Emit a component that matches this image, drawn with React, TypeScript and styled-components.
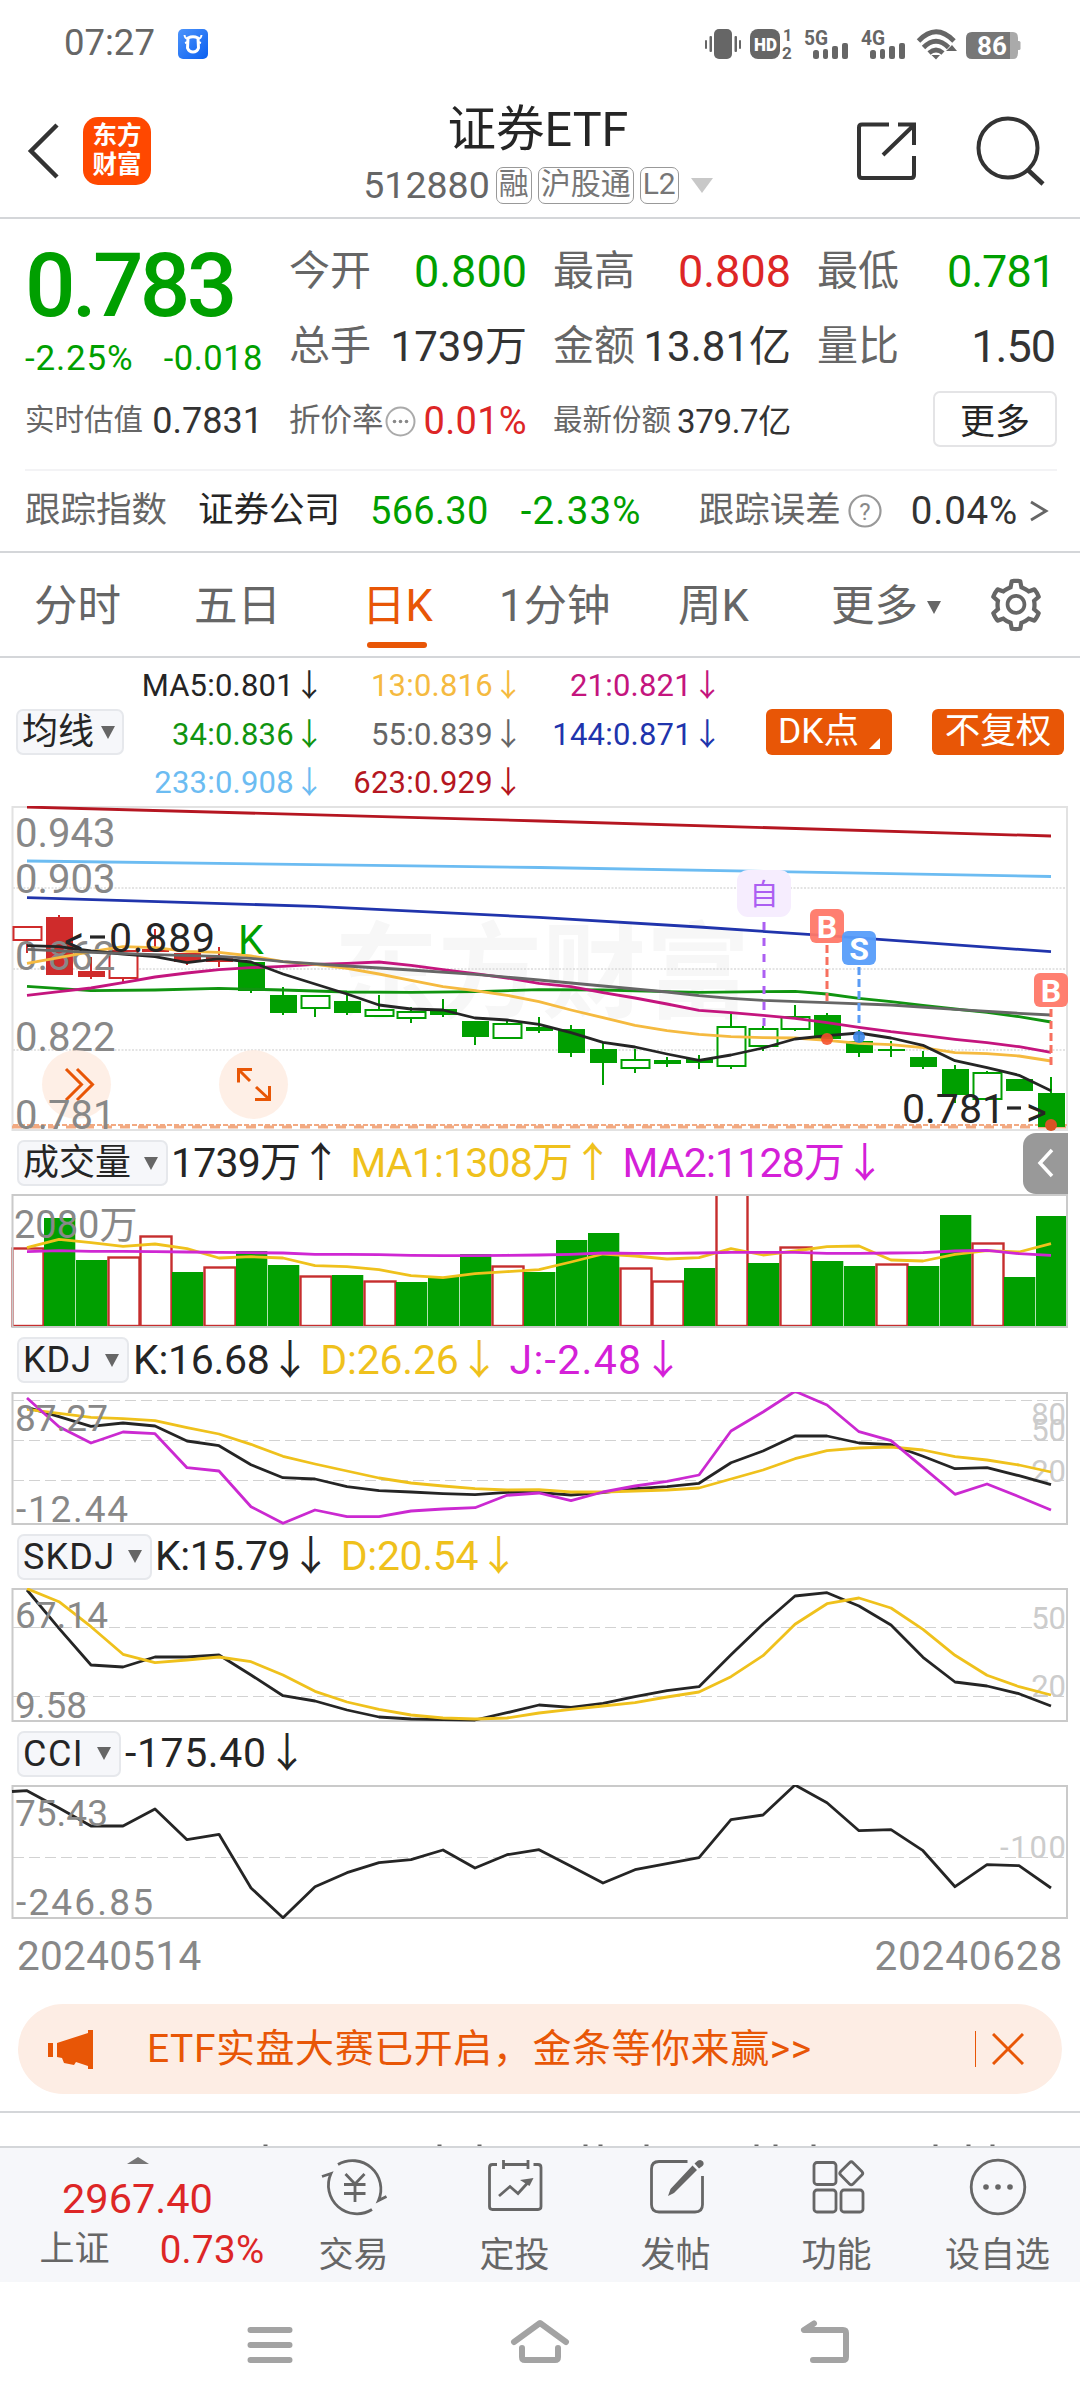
import React from "react";
import styled, { createGlobalStyle } from "styled-components";
import { AiOutlineSetting } from "react-icons/ai";

const C = {
  green: "#009f00",
  red: "#dd2626",
  ink: "#252525",
  dark: "#333333",
  mid: "#666666",
  light: "#888888",
  line: "#d4d6d9",
  orange: "#e85606",
  yellow: "#efc11c",
  pink: "#d420d8",
};

const GlobalStyle = createGlobalStyle`
  * { box-sizing: border-box; }
  body {
    margin: 0;
    background: #fff;
    font-family: Roboto, "Noto Sans CJK SC", sans-serif;
    line-height: 1;
    color: ${C.ink};
  }
  svg { display: block; }
  svg text { font-family: Roboto, "Noto Sans CJK SC", sans-serif; }
`;

const Page = styled.div`
  width: 1080px;
  height: 2408px;
  overflow: hidden;
  background: #fff;
  display: flex;
  flex-direction: column;
`;

const Txt = styled.span<{ $s: number; $c?: string; $ls?: number; $w?: number }>`
  font-size: ${(p) => p.$s}px;
  color: ${(p) => p.$c || C.ink};
  letter-spacing: ${(p) => p.$ls || 0}px;
  font-weight: ${(p) => p.$w || 400};
  white-space: pre;
`;

/* ---------- status bar ---------- */
const StatusBar = styled.div`
  height: 84px;
  flex: none;
  display: flex;
  align-items: center;
  justify-content: space-between;
  padding: 3px 58px 0 64px;
`;
const Row = styled.div<{ $gap?: number }>`
  display: flex;
  align-items: center;
  gap: ${(p) => p.$gap || 0}px;
`;

const AppBadge = () => (
  <svg width="30" height="30" viewBox="0 0 30 30">
    <defs>
      <linearGradient id="bb" x1="0" y1="0" x2="1" y2="1">
        <stop offset="0" stopColor="#4d94fb" />
        <stop offset="1" stopColor="#0a5ff0" />
      </linearGradient>
    </defs>
    <rect width="30" height="30" rx="5" fill="url(#bb)" />
    <path d="M6.500 6 Q7 10 10 9.500 M23.500 6 Q23 10 20 9.500 M7 14 L10 13 M23 14 L20 13" fill="none" stroke="#fff" strokeWidth="2" />
    <path d="M10 9 Q15 6.500 20 9 L20.500 19 Q19 23 15 23 Q11 23 9.500 19 Z" fill="none" stroke="#fff" strokeWidth="3" />
  </svg>
);

const StatusIcons = () => (
  <svg width="320" height="34" viewBox="702 25 320 34">
    <g fill={C.mid}>
      <rect x="714" y="27" width="18" height="30" rx="5" />
      <rect x="705" y="38" width="2" height="9" rx="1" />
      <rect x="709.500" y="34" width="2.500" height="16" rx="1" />
      <rect x="734.500" y="34" width="2.500" height="16" rx="1" />
      <rect x="739" y="38" width="2" height="9" rx="1" />
      <rect x="750" y="27" width="30" height="30" rx="8" />
    </g>
    <text x="754" y="48.500" fontSize="18" fontWeight="900" fill="#fff" textLength="23" lengthAdjust="spacingAndGlyphs">HD</text>
    <g fill={C.mid} fontWeight="700">
      <text x="783" y="39" fontSize="16">1</text>
      <text x="782" y="57" fontSize="17">2</text>
      <text x="804" y="42.500" fontSize="20" textLength="24" lengthAdjust="spacingAndGlyphs">5G</text>
      <text x="861" y="42.500" fontSize="20" textLength="24" lengthAdjust="spacingAndGlyphs">4G</text>
    </g>
    <g fill={C.mid}>
      {[813, 870].map((x) => (
        <g key={x}>
          <rect x={x} y="48" width="6" height="9" rx="2.500" />
          <rect x={x + 10} y="47" width="5" height="10" rx="2" />
          <rect x={x + 19} y="44" width="6" height="13" rx="2" />
          <rect x={x + 29} y="41" width="6" height="16" rx="2" />
        </g>
      ))}
    </g>
    <g fill="none" stroke={C.mid} strokeWidth="4.800">
      <path d="M918.500 39 Q936 20.500 954 39" />
      <path d="M923.500 45.500 Q936 33 948.500 45.500" />
      <path d="M929 51 Q936 45 943 51" />
    </g>
    <path d="M931.500 53 H940 L936 57.500 Z M952 43 L957 49 H946 Z" fill={C.mid} />
    <path d="M1009 30 h4 q5 0 5 6 v15 q0 6 -5 6 h-4 Z" fill="#aaa" />
    <rect x="1016.500" y="39" width="4" height="9" rx="1.500" fill="#aaa" />
    <path d="M1010 30 H972 q-6 0 -6 6 v15 q0 6 6 6 H1010 Z" fill="#777" />
    <text x="992" y="53" fontSize="26" fontWeight="700" fill="#fff" textAnchor="middle">86</text>
  </svg>
);

/* ---------- header ---------- */
const Header = styled.header`
  height: 135px;
  flex: none;
  display: grid;
  grid-template-columns: 1fr auto 1fr;
  align-items: center;
  padding: 0 34px 0 27px;
  border-bottom: 2px solid ${C.line};
`;
const Logo = styled.div`
  width: 68px;
  height: 68px;
  border-radius: 15px;
  background: #ff4800;
  color: #fff;
  font-size: 24.500px;
  font-weight: 700;
  line-height: 29px;
  padding-top: 4px;
  text-align: center;
`;
const TitleCol = styled.div`
  display: flex;
  flex-direction: column;
  align-items: center;
  gap: 12px;
  padding: 9px 0 0 3px;
`;
const Tag = styled.span`
  height: 37px;
  padding: 0 2px 2px;
  border: 1.500px solid #999;
  border-radius: 7px;
  font-size: 30px;
  color: #777;
  display: flex;
  align-items: center;
`;
const Tri = styled.i<{ $w: number; $h: number; $c: string }>`
  width: 0;
  height: 0;
  border-left: ${(p) => p.$w / 2}px solid transparent;
  border-right: ${(p) => p.$w / 2}px solid transparent;
  border-top: ${(p) => p.$h}px solid ${(p) => p.$c};
`;
const HeadActions = styled.div`
  display: flex;
  justify-content: flex-end;
  align-items: center;
  gap: 60px;
`;

/* ---------- quote ---------- */
const Quote = styled.section`
  height: 334px;
  flex: none;
  padding: 15px 23px 0 25px;
  border-bottom: 2px solid ${C.line};
`;
const QuoteTop = styled.div`
  display: grid;
  grid-template-columns: 238px 238px 238px 238px;
  grid-template-rows: 75px 75px 74px;
  column-gap: 26px;
  height: 235px;
`;
const PriceBlock = styled.div`
  grid-row: span 2;
  display: flex;
  flex-direction: column;
  gap: 5px;
`;
const Price = styled.div`
  height: 102px;
  font-size: 89px;
  font-weight: 500;
  letter-spacing: -3.700px;
  color: ${C.green};
  display: flex;
  align-items: center;
`;
const Cell = styled.div`
  display: flex;
  align-items: center;
  justify-content: space-between;
`;
const MoreBtn = styled.button`
  justify-self: end;
  align-self: center;
  width: 124px;
  height: 56px;
  margin: -4px -2px 0 0;
  padding: 0 0 3px;
  border: 2px solid #e4e4e6;
  border-radius: 7px;
  background: #fff;
  font: 400 35px Roboto, "Noto Sans CJK SC", sans-serif;
  color: ${C.ink};
`;
const TrackRow = styled.div`
  height: 82px;
  border-top: 2px solid #f3f3f5;
  display: flex;
  align-items: center;
`;
const Gap = styled.i<{ $w: number }>`
  width: ${(p) => p.$w}px;
  flex: none;
`;

/* ---------- tabs ---------- */
const Tabs = styled.nav`
  height: 105px;
  flex: none;
  border-bottom: 2px solid ${C.line};
  display: flex;
  align-items: stretch;
  padding-left: 34px;
`;
const Tab = styled.div<{ $w: number; $top?: number }>`
  width: ${(p) => p.$w}px;
  font-size: 43.500px;
  color: ${C.mid};
  display: flex;
  align-items: center;
  gap: 9px;
  padding-top: ${(p) => p.$top ?? 5}px;
  white-space: nowrap;
`;
const OnTab = styled.span`
  height: 100%;
  color: ${C.orange};
  display: flex;
  flex-direction: column;
  justify-content: flex-end;
  align-items: center;
  gap: 14px;
  padding-bottom: 8px;
  &::after {
    content: "";
    width: 60px;
    height: 6px;
    border-radius: 3px;
    background: ${C.orange};
  }
`;

/* ---------- legends ---------- */
const MaBar = styled.div`
  height: 148px;
  flex: none;
  display: flex;
  align-items: center;
  padding: 0 0 0 16px;
`;
const PickBtn = styled.div<{ $w: number; $gap: number; $ls?: number }>`
  width: ${(p) => p.$w}px;
  height: 46px;
  flex: none;
  border: 2px solid #e6e8ec;
  border-radius: 7px;
  background: #f6f7fa;
  font-size: 36px;
  letter-spacing: ${(p) => p.$ls || 0}px;
  color: ${C.ink};
  display: flex;
  align-items: center;
  padding-left: 4px;
  padding-right: ${(p) => p.$gap}px;
  justify-content: space-between;
`;
const MaGrid = styled.div`
  display: grid;
  grid-template-columns: 201px 199px 199px;
  grid-auto-rows: 48.500px;
  justify-items: end;
  align-items: center;
  padding-top: 4px;
`;
const OrangeBtn = styled.div<{ $w: number }>`
  width: ${(p) => p.$w}px;
  height: 46px;
  margin-left: 40px;
  border-radius: 6px;
  background: ${C.orange};
  color: #fff;
  font-size: 35.500px;
  display: flex;
  align-items: center;
  justify-content: center;
`;
const Corner = styled.i`
  align-self: flex-end;
  margin: 0 0 6px 10px;
  border-left: 11px solid transparent;
  border-bottom: 11px solid #fff;
`;
const Legend = styled.div<{ $h: number }>`
  height: ${(p) => p.$h}px;
  flex: none;
  display: flex;
  align-items: center;
  padding-left: 17px;
`;
const Drawer = styled.div`
  width: 45px;
  height: 61px;
  margin-left: auto;
  margin-right: 12px;
  border-radius: 13px 0 0 13px;
  background: #999;
  display: flex;
  align-items: center;
  justify-content: center;
`;

/* ---------- chart data ---------- */
const X = (i: number) => 27 + 32 * i;
const pts = (ys: number[], base: number) => ys.map((y, i) => `${X(i)},${(base + y / 3).toFixed(1)}`).join(" ");
const sparse = (p: number[][], base: number) => p.map(([i, y]) => `${X(i)},${(base + y / 3).toFixed(1)}`).join(" ");

// [kind, bodyTop, bodyBottom, wickTop, wickBottom]
type K = [string, number, number, number, number];
const candles: K[] = [
  ["rh", 927, 940, 927, 953], ["rf", 917, 975, 915, 975], ["rf", 971, 977, 957, 979], ["rh", 951, 978, 951, 982],
  ["rf", 949, 952, 929, 952], ["rf", 953, 962, 953, 965], ["rf", 957, 962, 947, 967], ["gf", 962, 991, 962, 993],
  ["gf", 995, 1013, 987, 1015], ["gh", 996, 1008, 995, 1017], ["gf", 1001, 1013, 995, 1015], ["gh", 1010, 1016, 995, 1017],
  ["gh", 1012, 1018, 1007, 1023], ["gf", 1009, 1015, 999, 1017], ["gf", 1021, 1037, 1021, 1045], ["gh", 1024, 1038, 1021, 1039],
  ["gf", 1027, 1031, 1017, 1033], ["gf", 1029, 1053, 1025, 1057], ["gf", 1049, 1063, 1043, 1085], ["gh", 1060, 1068, 1049, 1073],
  ["gf", 1060, 1064, 1057, 1067], ["gf", 1059, 1063, 1055, 1069], ["gh", 1027, 1066, 1013, 1069], ["gh", 1029, 1046, 1026, 1051],
  ["gh", 1017, 1029, 1005, 1031], ["gf", 1015, 1039, 1013, 1039], ["gf", 1041, 1053, 1030, 1057], ["gf", 1049, 1051, 1041, 1057],
  ["gf", 1057, 1067, 1051, 1069], ["gf", 1069, 1095, 1065, 1103], ["gh", 1073, 1099, 1071, 1099], ["gf", 1079, 1091, 1079, 1091],
  ["gf", 1093, 1127, 1077, 1130],
];
const ma5 = [467, 470, 483, 492, 500, 518, 506, 516, 552, 582, 612, 645, 657, 660, 684, 690, 703, 728, 757, 771, 792, 811, 795, 774, 747, 737, 729, 744, 766, 812, 833, 856, 902];
const ma13 = [520, 503, 485, 470, 473, 484, 487, 498, 515, 523, 535, 552, 571, 590, 602, 616, 635, 660, 683, 706, 722, 733, 740, 743, 744, 751, 760, 764, 773, 788, 791, 798, 813];
const ma21 = [616, 605, 594, 578, 561, 549, 539, 533, 529, 523, 520, 516, 526, 539, 551, 564, 580, 590, 608, 624, 642, 661, 668, 676, 685, 698, 712, 725, 736, 748, 758, 770, 787];
const ma34 = [[0, 589], [2, 602], [4, 600], [6, 595], [8, 600], [10, 606], [12, 607], [14, 605], [16, 599], [18, 600], [20, 605], [21, 607], [23, 605], [24, 604], [25, 612], [26, 625], [27, 635], [28, 646], [29, 657], [30, 667], [31, 680], [32, 696]];
const ma55 = [[0, 478], [2, 487], [4, 494], [6, 499], [7, 505], [8, 515], [10, 528], [12, 540], [14, 553], [16, 570], [18, 588], [20, 606], [21, 617], [22, 625], [23, 631], [25, 638], [27, 645], [29, 658], [31, 670], [32, 675]];
const ma144 = [[0, 323], [9, 349], [16, 382], [21, 411], [25, 437], [32, 485]];

const vols = "r1248 g1218 g1260 r1257 r1236 g1272 r1267 g1251 g1265 r1276 g1275 r1281 g1282 g1277 g1254 r1266 g1272 g1240 g1233 r1268 r1281 g1268 r1194 g1263 r1247 g1261 g1266 r1264 g1266 g1215 r1243 g1277 g1216".split(" ");
const volMa1 = [353, 328, 338, 349, 342, 356, 384, 380, 384, 407, 410, 419, 437, 443, 431, 425, 419, 396, 372, 378, 387, 383, 356, 375, 363, 350, 348, 390, 393, 373, 362, 366, 341];
const volMa2 = [365, 362, 364, 364, 365, 366, 367, 368, 369, 373, 373, 374, 376, 377, 377, 376, 375, 373, 369, 370, 370, 369, 367, 367, 367, 370, 370, 369, 368, 363, 361, 371, 376];
const kdjK = [232, 260, 289, 279, 288, 333, 347, 404, 443, 447, 470, 482, 486, 491, 494, 487, 488, 495, 488, 476, 470, 460, 398, 363, 318, 318, 339, 344, 379, 416, 413, 437, 464];
const kdjD = [238, 250, 262, 266, 272, 293, 312, 343, 379, 402, 423, 444, 459, 468, 476, 480, 479, 486, 486, 483, 480, 474, 447, 420, 386, 362, 354, 351, 360, 380, 390, 405, 426];
const kdjJ = [204, 290, 339, 306, 311, 413, 423, 530, 580, 540, 560, 560, 543, 537, 533, 496, 489, 512, 486, 468, 454, 435, 303, 246, 184, 225, 305, 332, 412, 493, 462, 500, 540];
const skK = [180, 295, 405, 411, 381, 381, 375, 435, 497, 513, 540, 561, 567, 569, 570, 548, 525, 532, 520, 500, 482, 470, 374, 282, 198, 188, 228, 285, 382, 456, 468, 491, 528];
const skD = [176, 215, 290, 373, 398, 390, 381, 395, 435, 484, 516, 538, 555, 564, 567, 564, 549, 538, 528, 518, 501, 486, 440, 377, 283, 221, 204, 234, 298, 376, 436, 470, 495];
const cci = [182, 234, 288, 288, 237, 329, 313, 474, 563, 470, 428, 398, 389, 360, 414, 374, 359, 409, 459, 419, 401, 383, 269, 255, 165, 218, 302, 299, 362, 470, 404, 407, 474];

const Line = ({ p, c, w = 2.8 }: { p: string; c: string; w?: number }) => (
  <polyline points={p} fill="none" stroke={c} strokeWidth={w} strokeLinejoin="round" />
);
const AxisText = ({ x = 15, y, s = 40, c = C.light, end, children }: { x?: number; y: number; s?: number; c?: string; end?: boolean; children: React.ReactNode }) => (
  <text x={x} y={y} fontSize={s} fill={c} textAnchor={end ? "end" : "start"}>{children}</text>
);
const Frame = ({ y, h, c = "#cacaca" }: { y: number; h: number; c?: string }) => (
  <rect x="12.500" y={y} width="1054.500" height={h} fill="none" stroke={c} strokeWidth="2" />
);
const Dash = ({ y }: { y: number }) => (
  <line x1="13" x2="1067" y1={y} y2={y} stroke="#d2d2d2" strokeWidth="1.200" strokeDasharray="11 5" />
);
const Marker = ({ x, y, t, c }: { x: number; y: number; t: string; c: string }) => (
  <g>
    <rect x={x - 17} y={y} width="34" height="34" rx="6" fill={c} opacity="0.95" />
    <text x={x} y={y + 28.5} fontSize="32" fontWeight="700" fill="#fff" textAnchor="middle">{t}</text>
  </g>
);

const PriceChart = () => (
  <svg width="1080" height="326" viewBox="0 806 1080 326">
    <text x="334" y="1010" fontSize="104" fontWeight="700" fill="#f7f7f7">东方财富</text>
    {[888, 969, 1050].map((y) => (
      <line key={y} x1="13" x2="1067" y1={y} y2={y} stroke="#dcdcdc" strokeWidth="1.500" strokeDasharray="2 1.500" />
    ))}
    <Frame y={807} h={323} c="#e2e2e2" />
    <AxisText y={847}>0.943</AxisText>
    <AxisText y={893}>0.903</AxisText>
    <AxisText y={1051}>0.822</AxisText>
    <g stroke="#f2a981">
      <line x1="13" x2="1067" y1="1125" y2="1125" strokeWidth="2" strokeDasharray="5 2" />
      <line x1="12" x2="1067" y1="1127" y2="1127" strokeWidth="3" strokeDasharray="10 8" />
    </g>
    {candles.map(([k, t, b, wt, wb], i) => {
      const c = k[0] === "r" ? "#cf2b2b" : "#009f00";
      const hollow = k[1] === "h";
      return (
        <g key={i} stroke={c} strokeWidth="2">
          <line x1={X(i)} x2={X(i)} y1={wt} y2={t} />
          <line x1={X(i)} x2={X(i)} y1={b} y2={wb} />
          {hollow ? (
            <rect x={X(i) - 13.5} y={t} width="28" height={b - t} fill="#fff" />
          ) : (
            <rect x={X(i) - 13} y={t} width="27" height={b - t} fill={c} stroke="none" />
          )}
        </g>
      );
    })}
    <AxisText y={970}>0.862</AxisText>
    <Line p="27,807 540,821 1051,836" c="#b51621" />
    <Line p="27,861 540,867.500 1051,876.500" c="#6cbcf2" />
    <Line p={sparse(ma144, 790)} c="#2034ac" />
    <Line p={sparse(ma34, 790)} c="#109410" />
    <Line p={pts(ma21, 790)} c="#c4157e" />
    <Line p={pts(ma13, 790)} c="#f5ba40" />
    <Line p={pts(ma5, 790)} c={C.ink} />
    <Line p={sparse(ma55, 790)} c="#666" />
    <text x="64" y="955" fontSize="40" fill={C.ink}>&lt;</text>
    <line x1="90" x2="105" y1="937" y2="937" stroke={C.ink} strokeWidth="3.200" />
    <text x="109" y="952" fontSize="41" fill={C.ink} textLength="106">0.889</text>
    <text x="238" y="954" fontSize="41" fill={C.green}>K</text>
    <circle cx="76.500" cy="1084.500" r="34.500" fill="#fee9dd" opacity="0.75" />
    <circle cx="253.500" cy="1084.500" r="34.500" fill="#fee9dd" opacity="0.75" />
    <g fill="none" stroke={C.orange} strokeWidth="3">
      <path d="M66 1069 L81.500 1084.500 L66 1100 M77 1069 L92.500 1084.500 L77 1100" />
      <path d="M238.500 1082.500 V1069.500 H252 M239 1070 L250 1081 M269.500 1086 V1099.500 H255 M269 1099 L256 1087" />
    </g>
    <AxisText y={1129}>0.781</AxisText>
    <g strokeWidth="3" fill="none">
      <line x1="764" x2="764" y1="922" y2="1026" stroke="#ac5ff2" strokeDasharray="8 8" />
      <line x1="827" x2="827" y1="945" y2="1001" stroke="#f7705f" strokeDasharray="8 4" />
      <line x1="859" x2="859" y1="967" y2="1024" stroke="#5b9cf5" strokeDasharray="8 4" />
      <line x1="1051" x2="1051" y1="1009" y2="1066" stroke="#f7705f" strokeDasharray="8 4" />
    </g>
    <rect x="737" y="870" width="54" height="47" rx="11" fill="#f6edfe" />
    <text x="764" y="905" fontSize="29" fill="#ac5ff2" textAnchor="middle">自</text>
    <Marker x={827} y={909} t="B" c="#ff7868" />
    <Marker x={859} y={931} t="S" c="#579dfa" />
    <Marker x={1051} y={973} t="B" c="#ff7868" />
    <text x="902" y="1123" fontSize="41" fill={C.ink}>0.781</text>
    <line x1="1007" x2="1021" y1="1108" y2="1108" stroke={C.ink} strokeWidth="3.200" />
    <text x="1026" y="1126" fontSize="40" fill={C.ink}>&gt;</text>
    <circle cx="827" cy="1039" r="6" fill="#f4512b" opacity="0.9" />
    <circle cx="859" cy="1037" r="6" fill="#3b86ea" opacity="0.9" />
    <circle cx="1051" cy="1125" r="6" fill="#d95325" />
  </svg>
);

const VolumeChart = () => (
  <svg width="1080" height="134" viewBox="0 1194 1080 134">
    {vols.map((v, i) => {
      const top = Number(v.slice(1));
      return v[0] === "r" ? (
        <rect key={i} x={12.5 + 32 * i} y={top + 0.5} width="31" height={1325.5 - top} fill="#fff" stroke="#c62e2e" strokeWidth="2.400" />
      ) : (
        <rect key={i} x={12 + 32 * i} y={top} width="31.300" height={1326.5 - top} fill="#009f00" />
      );
    })}
    <Frame y={1195} h={132} />
    <text x="14" y="1238" fontSize="38" fill={C.light}>2080万</text>
    <Line p={pts(volMa1, 1130)} c={C.yellow} />
    <Line p={pts(volMa2, 1130)} c="#cf27d3" />
  </svg>
);

const KdjChart = () => (
  <svg width="1080" height="133" viewBox="0 1392 1080 133">
    <Frame y={1393} h={131} />
    {[1400.5, 1440.5, 1480.5].map((y) => <Dash key={y} y={y} />)}
    <AxisText x={1066} y={1425} s={31} c="#ccc" end>80</AxisText>
    <AxisText x={1066} y={1441} s={31} c="#ccc" end>50</AxisText>
    <AxisText x={1066} y={1482} s={31} c="#ccc" end>20</AxisText>
    <Line p={pts(kdjK, 1330)} c={C.ink} />
    <Line p={pts(kdjD, 1330)} c={C.yellow} />
    <Line p={pts(kdjJ, 1330)} c="#cb29d1" />
    <AxisText y={1431} s={37}>87.27</AxisText>
    <text x="16" y="1521.500" fontSize="37" fill={C.light} textLength="112">-12.44</text>
  </svg>
);

const SkdjChart = () => (
  <svg width="1080" height="134" viewBox="0 1588 1080 134">
    <Frame y={1589} h={132} />
    {[1627.5, 1696.5].map((y) => <Dash key={y} y={y} />)}
    <AxisText x={1066} y={1629} s={31} c="#ccc" end>50</AxisText>
    <AxisText x={1066} y={1697} s={31} c="#ccc" end>20</AxisText>
    <Line p={pts(skK, 1530)} c={C.ink} />
    <Line p={pts(skD, 1530)} c={C.yellow} />
    <AxisText y={1628} s={37}>67.14</AxisText>
    <AxisText y={1718} s={37}>9.58</AxisText>
  </svg>
);

const CciChart = () => (
  <svg width="1080" height="134" viewBox="0 1785 1080 134">
    <Frame y={1786} h={132} />
    <Dash y={1857.5} />
    <text x="1000" y="1858" fontSize="31" fill="#ccc" textLength="66">-100</text>
    <Line p={"12,1791.500 " + pts(cci, 1730)} c={C.ink} />
    <AxisText y={1826} s={37}>75.43</AxisText>
    <text x="16" y="1915" fontSize="37" fill={C.light} textLength="137">-246.85</text>
  </svg>
);

/* ---------- bottom ---------- */
const Dates = styled.div`
  height: 85px;
  flex: none;
  display: flex;
  justify-content: space-between;
  padding: 17px 17px 0 17px;
`;
const Banner = styled.div`
  height: 90px;
  flex: none;
  margin: 0 18px;
  border-radius: 45px;
  background: #fdede4;
  display: flex;
  align-items: center;
  padding: 0 38px 0 29px;
`;
const Sep = styled.i`
  width: 1.500px;
  height: 36px;
  margin-left: auto;
  margin-right: 16px;
  background: ${C.orange};
`;
const Peek = styled.div`
  height: 37px;
  flex: none;
  margin-top: 17px;
  border-top: 2px solid ${C.line};
  border-bottom: 2px solid ${C.line};
  display: flex;
  align-items: flex-end;
`;
const BottomBar = styled.div`
  height: 134px;
  flex: none;
  background: #f6f7fa;
  display: flex;
`;
const IndexBox = styled.div`
  width: 273px;
  display: flex;
  flex-direction: column;
  align-items: center;
  padding: 9px 0 0 2px;
`;
const IndexLine = styled.div<{ $mt: number; $gap?: number; $pl?: number }>`
  margin-top: ${(p) => p.$mt}px;
  padding-left: ${(p) => p.$pl || 0}px;
  display: flex;
  align-items: center;
  gap: ${(p) => p.$gap || 0}px;
`;
const UpTri = styled.i`
  border-left: 11px solid transparent;
  border-right: 11px solid transparent;
  border-bottom: 7px solid #777;
`;
const NavItem = styled.div`
  width: 161px;
  display: flex;
  flex-direction: column;
  align-items: center;
  padding-top: 7px;
  gap: 19px;
  font-size: 35px;
  color: ${C.mid};
`;
const SysNav = styled.div`
  flex: 1;
  display: flex;
  padding: 34px 0 0 240px;
`;

const NavIcon = ({ cx, children }: { cx: number; children: React.ReactNode }) => (
  <svg width="70" height="64" viewBox={`${cx - 35} 2154 70 64`} fill="none" stroke={C.mid} strokeWidth="2.800">{children}</svg>
);

const maItems: [string, string][] = [
  ["MA5:0.801↓", C.ink], ["13:0.816↓", "#f5ba40"], ["21:0.821↓", "#c4157e"],
  ["34:0.836↓", "#109410"], ["55:0.839↓", "#666"], ["144:0.871↓", "#2034ac"],
  ["233:0.908↓", "#6cbcf2"], ["623:0.929↓", "#b51621"],
];

export default function App() {
  return (
    <Page>
      <GlobalStyle />
      <StatusBar>
        <Row $gap={23}>
          <Txt $s={36.5} $c={C.mid}>07:27</Txt>
          <AppBadge />
        </Row>
        <StatusIcons />
      </StatusBar>

      <Header>
        <Row $gap={23}>
          <svg width="33" height="56" viewBox="0 0 33 56"><path d="M30 2 L4 28 L30 54" fill="none" stroke={C.dark} strokeWidth="4.500" /></svg>
          <Logo>东方<br />财富</Logo>
        </Row>
        <TitleCol>
          <Txt $s={48.5}>证券ETF</Txt>
          <Row $gap={6}>
            <Txt $s={37.5} $c={C.mid}>512880</Txt>
            <Tag>融</Tag><Tag>沪股通</Tag><Tag>L2</Tag>
            <Gap $w={0} /><Tri $w={22} $h={15} $c="#c8c8c8" />
          </Row>
        </TitleCol>
        <HeadActions>
          <svg width="60" height="60" viewBox="856 121 60 60" fill="none" stroke={C.dark} strokeWidth="4">
            <path d="M889 124.500 H862 Q859 124.500 859 127.500 V175 Q859 178 862 178 H911 Q914 178 914 175 V156 M898 124.500 H914 V145 M913 126 L883 155" />
          </svg>
          <svg width="70" height="72" viewBox="977 115 70 72" fill="none" stroke={C.dark} strokeWidth="4">
            <circle cx="1009" cy="148" r="29.500" /><path d="M1029 170 L1044 184" strokeWidth="4.500" />
          </svg>
        </HeadActions>
      </Header>

      <Quote>
        <QuoteTop>
          <PriceBlock>
            <Price>0.783</Price>
            <Cell><Txt $s={35} $c={C.green} $ls={0.8}>-2.25%</Txt><Txt $s={34.5} $c={C.green} $ls={0.5}>-0.018</Txt></Cell>
          </PriceBlock>
          <Cell><Txt $s={41} $c={C.mid}>今开</Txt><Txt $s={45} $c={C.green}>0.800</Txt></Cell>
          <Cell><Txt $s={41} $c={C.mid}>最高</Txt><Txt $s={45} $c={C.red}>0.808</Txt></Cell>
          <Cell><Txt $s={41} $c={C.mid}>最低</Txt><Txt $s={45} $c={C.green} $ls={-1}>0.781</Txt></Cell>
          <Cell><Txt $s={41} $c={C.mid}>总手</Txt><Txt $s={42} $c={C.dark}>1739万</Txt></Cell>
          <Cell><Txt $s={41} $c={C.mid}>金额</Txt><Txt $s={42} $c={C.dark}>13.81亿</Txt></Cell>
          <Cell><Txt $s={41} $c={C.mid}>量比</Txt><Txt $s={45} $c={C.dark} $ls={-1}>1.50</Txt></Cell>
          <Cell><Txt $s={29.5} $c={C.mid}>实时估值</Txt><Txt $s={36} $c={C.dark}>0.7831</Txt></Cell>
          <Cell>
            <Row $gap={1}>
              <Txt $s={31.5} $c={C.mid}>折价率</Txt>
              <svg width="31" height="31" viewBox="0 0 31 31">
                <circle cx="15.500" cy="15.500" r="14" fill="none" stroke="#aaa" strokeWidth="2" />
                {[9.5, 15.5, 21.5].map((x) => <circle key={x} cx={x} cy="15.500" r="1.800" fill="#888" />)}
              </svg>
            </Row>
            <Txt $s={38} $c={C.red} $ls={0.3}>0.01%</Txt>
          </Cell>
          <Cell><Txt $s={29.5} $c={C.mid}>最新份额</Txt><Txt $s={33} $c={C.dark} $ls={-0.3}>379.7亿</Txt></Cell>
          <MoreBtn>更多</MoreBtn>
        </QuoteTop>
        <TrackRow>
          <Txt $s={35.5} $c={C.mid}>跟踪指数</Txt><Gap $w={31} />
          <Txt $s={35.5}>证券公司</Txt><Gap $w={30} />
          <Txt $s={38} $c={C.green} $ls={0.3}>566.30</Txt><Gap $w={32} />
          <Txt $s={38.5} $c={C.green} $ls={1.2}>-2.33%</Txt><Gap $w={57} />
          <Txt $s={35.5} $c={C.mid}>跟踪误差</Txt><Gap $w={7} />
          <svg width="34" height="34" viewBox="0 0 34 34">
            <circle cx="17" cy="17" r="15.500" fill="none" stroke="#999" strokeWidth="2.200" />
            <text x="17" y="25.500" fontSize="24" fill="#888" textAnchor="middle">?</text>
          </svg>
          <Gap $w={29} />
          <Txt $s={38.5} $c={C.dark} $ls={0.8}>0.04%</Txt><Gap $w={11} />
          <svg width="20" height="22" viewBox="0 0 20 22"><path d="M2 2 L17 11 L2 20" fill="none" stroke={C.mid} strokeWidth="2.800" /></svg>
        </TrackRow>
      </Quote>

      <Tabs>
        <Tab $w={160}>分时</Tab>
        <Tab $w={168}>五日</Tab>
        <Tab $w={137} $top={0}><OnTab>日K</OnTab></Tab>
        <Tab $w={179}>1分钟</Tab>
        <Tab $w={153}>周K</Tab>
        <Tab $w={155}>更多<Tri $w={15} $h={13} $c={C.mid} /></Tab>
        <Tab $w={70} $top={0}><AiOutlineSetting size={60} color={C.mid} /></Tab>
      </Tabs>

      <MaBar>
        <PickBtn $w={108} $gap={7}>均线<Tri $w={15} $h={13} $c={C.mid} /></PickBtn>
        <MaGrid>
          {maItems.map(([t, c]) => <Txt key={t} $s={31} $c={c} $ls={0.2}>{t}</Txt>)}
        </MaGrid>
        <Gap $w={3} />
        <OrangeBtn $w={126}>DK点<Corner /></OrangeBtn>
        <OrangeBtn $w={132}>不复权</OrangeBtn>
      </MaBar>

      <PriceChart />
      <Legend $h={62}>
        <PickBtn $w={151} $gap={8}>成交量<Tri $w={15} $h={13} $c={C.mid} /></PickBtn>
        <Gap $w={3} />
        <Txt $s={41} $ls={-0.8}>1739万↑</Txt><Gap $w={10} />
        <Txt $s={41} $c={C.yellow} $ls={-0.8}>MA1:1308万↑</Txt><Gap $w={10} />
        <Txt $s={41} $c={C.pink} $ls={-0.8}>MA2:1128万↓</Txt>
        <Drawer><svg width="18" height="32" viewBox="0 0 18 32"><path d="M15 3 L3 16 L15 29" fill="none" stroke="#fff" strokeWidth="3.500" /></svg></Drawer>
      </Legend>
      <VolumeChart />
      <Legend $h={64}>
        <PickBtn $w={112} $gap={8} $ls={1}>KDJ<Tri $w={15} $h={13} $c={C.mid} /></PickBtn>
        <Gap $w={4} />
        <Txt $s={41} $ls={-0.3}>K:16.68↓</Txt><Gap $w={10} />
        <Txt $s={41} $c={C.yellow} $ls={-0.2}>D:26.26↓</Txt><Gap $w={10} />
        <Txt $s={41} $c={C.pink} $ls={1.3}>J:-2.48↓</Txt>
      </Legend>
      <KdjChart />
      <Legend $h={63}>
        <PickBtn $w={135} $gap={8} $ls={1.2}>SKDJ<Tri $w={15} $h={13} $c={C.mid} /></PickBtn>
        <Gap $w={3} />
        <Txt $s={41} $ls={-0.5}>K:15.79↓</Txt><Gap $w={10} />
        <Txt $s={41} $c={C.yellow} $ls={-0.3}>D:20.54↓</Txt>
      </Legend>
      <SkdjChart />
      <Legend $h={63}>
        <PickBtn $w={104} $gap={8} $ls={1.5}>CCI<Tri $w={15} $h={13} $c={C.mid} /></PickBtn>
        <Gap $w={4} />
        <Txt $s={41} $ls={0.6}>-175.40↓</Txt>
      </Legend>
      <CciChart />

      <Dates>
        <Txt $s={40.5} $c={C.light} $ls={0.3}>20240514</Txt>
        <Txt $s={40.5} $c={C.light} $ls={0.8}>20240628</Txt>
      </Dates>

      <Banner>
        <svg width="48" height="42" viewBox="47 2027 48 42" fill={C.orange}>
          <path d="M48 2042 H53 V2056 H48 Z M57 2042 L88 2032 V2029 H93 V2068 H88 V2065 L76 2061 L74 2064 L64 2062 L62 2057 L57 2056 Z" />
        </svg>
        <Gap $w={52} />
        <Txt $s={39} $c={C.orange} $ls={0.55}>ETF实盘大赛已开启，金条等你来赢&gt;&gt;</Txt>
        <Sep />
        <svg width="32" height="32" viewBox="0 0 32 32"><path d="M1 1 L31 31 M31 1 L1 31" stroke={C.orange} strokeWidth="3" /></svg>
      </Banner>

      <Peek>
        <svg width="1080" height="2" viewBox="0 0 1080 2" fill="#666">
          {[265, 439, 479, 585, 600, 646, 756, 775, 813, 935, 968, 992].map((x) => <rect key={x} x={x - 1.5} y="0.500" width="4" height="1.500" />)}
        </svg>
      </Peek>

      <BottomBar>
        <IndexBox>
          <UpTri />
          <IndexLine $mt={14}>
            <Txt $s={41.5} $c={C.red}>2967.40</Txt>
          </IndexLine>
          <IndexLine $mt={11} $gap={50} $pl={29}>
            <Txt $s={35} $c={C.mid}>上证</Txt>
            <Txt $s={38.5} $c={C.red} $ls={0.3}>0.73%</Txt>
          </IndexLine>
        </IndexBox>
        <NavItem>
          <NavIcon cx={355}>
            <path d="M339 2163.500 A28.500 28.500 0 0 1 379.500 2199.500 L387.500 2195.500 M373 2208.500 A28.500 28.500 0 0 1 332 2172.500 L323 2175.500" />
            <path d="M346.500 2173 L356 2183 L365.500 2173 M345 2183.500 H366.500 M345 2192.500 H366.500 M356 2183 V2201" />
          </NavIcon>
          交易
        </NavItem>
        <NavItem>
          <NavIcon cx={515.5}>
            <path d="M497.500 2163.500 H493 Q490 2163.500 490 2166.500 V2205.500 Q490 2208.500 493 2208.500 H538.500 Q541.500 2208.500 541.500 2205.500 V2166.500 Q541.500 2163.500 538.500 2163.500 H534 M504 2159 V2168 M528.500 2159 V2168 M504 2163.500 H528.500" />
            <path d="M499.500 2195 L510.500 2185.500 L518.500 2192.500 L528 2182" />
            <path d="M534 2177 L520.500 2179 L530 2185 Z" fill={C.mid} stroke="none" />
          </NavIcon>
          定投
        </NavItem>
        <NavItem>
          <NavIcon cx={676}>
            <path d="M687.500 2160.500 H659 Q651.500 2160.500 651.500 2168 V2203.500 Q651.500 2211 659 2211 H695 Q702.500 2211 702.500 2203.500 V2175" />
            <path d="M668 2195 L670.500 2188 L692.500 2164.500 L697 2169 L674 2192 Z M694.500 2162.500 L698 2159.500 Q701 2158 703 2160.500 Q704.500 2163 702.500 2165 L699 2167.500 Z" fill={C.mid} stroke="none" />
          </NavIcon>
          发帖
        </NavItem>
        <NavItem>
          <NavIcon cx={837}>
            <rect x="814" y="2161.500" width="22" height="22" rx="3" />
            <rect x="814" y="2189" width="22" height="22" rx="3" />
            <rect x="841" y="2189" width="22" height="22" rx="3" />
            <rect x="842.500" y="2163.500" width="17.500" height="17.500" rx="2.500" transform="rotate(45 851.200 2172.300)" />
          </NavIcon>
          功能
        </NavItem>
        <NavItem>
          <NavIcon cx={999}>
            <circle cx="999" cy="2186" r="26.800" />
            {[987, 999, 1011].map((x) => <circle key={x} cx={x} cy="2186" r="2.800" fill={C.mid} stroke="none" />)}
          </NavIcon>
          设自选
        </NavItem>
      </BottomBar>

      <SysNav>
        <svg width="60" height="50" viewBox="240 2316 60 50" stroke="#a3a3a3" strokeWidth="6" strokeLinecap="round"><path d="M250.500 2330 H289.500 M250.500 2345 H289.500 M250.500 2360 H289.500" /></svg>
        <Gap $w={208} />
        <svg width="64" height="50" viewBox="508 2316 64 50" fill="none" stroke="#a3a3a3" strokeWidth="6" strokeLinecap="round" strokeLinejoin="round"><path d="M514 2342 L540 2323 L566 2342 M522 2348 V2357 Q522 2360 525 2360 H555 Q558 2360 558 2357 V2348" /></svg>
        <Gap $w={223} />
        <svg width="60" height="50" viewBox="795 2316 60 50" fill="none" stroke="#a3a3a3" strokeWidth="6" strokeLinecap="round" strokeLinejoin="round"><path d="M814 2323.500 L804 2330 H843 Q846 2330 846 2333 V2357 Q846 2360 843 2360 H813" /></svg>
      </SysNav>
    </Page>
  );
}
